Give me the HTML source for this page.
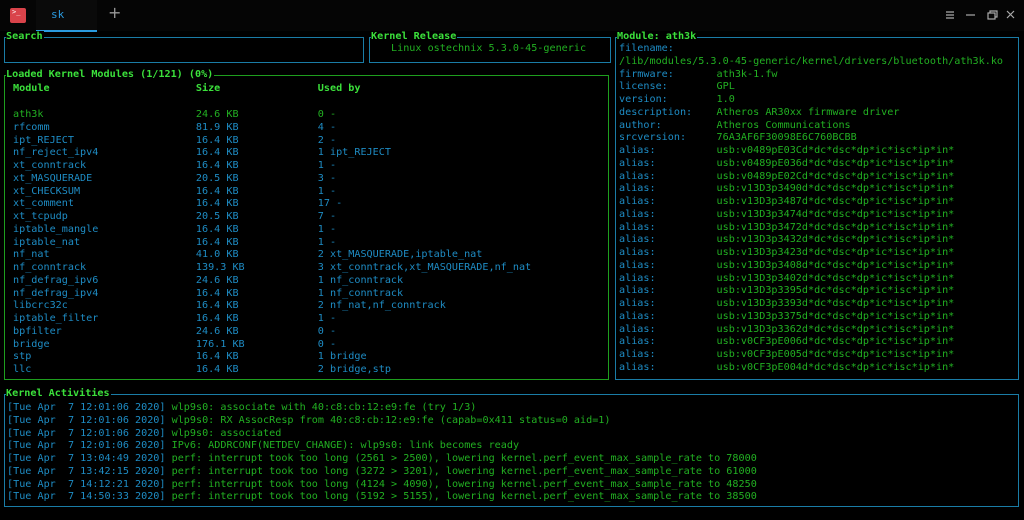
<!DOCTYPE html>
<html><head><meta charset="utf-8"><style>
html,body{margin:0;padding:0;background:#000;width:1024px;height:520px;overflow:hidden}
body{position:relative;font-family:"DejaVu Sans Mono","Liberation Mono",monospace;font-size:10.15px}
.p{position:absolute;margin:0;white-space:pre;line-height:12.75px;font-family:inherit;font-size:10.15px}
.b{color:#1e8cc4}.g{color:#22b022}.t{color:#3be03b;font-weight:bold}
.box{position:absolute;border:1px solid #1a7ca6;box-sizing:border-box}
.gb{border-color:#1e9e1e}
.ttl{position:absolute;top:-7px;left:1px;background:#000;line-height:12px;padding-right:1px}
</style></head><body>
<div style="position:absolute;left:0;top:0;width:1024px;height:31px;background:#050505"></div>
<div style="position:absolute;left:10px;top:8px;width:16px;height:15px;background:#d9434a;border-radius:2px"></div>
<div style="position:absolute;left:12px;top:8px;color:#fff;font-size:7px;line-height:9px">&gt;_</div>
<div style="position:absolute;left:36px;top:0;width:61px;height:31px;background:#0a0a0a"></div>
<div class="p b" style="left:51px;top:9px;font-size:11px;color:#2a9be0">sk</div>
<div style="position:absolute;left:36px;top:30px;width:61px;height:2px;background:#2a9be0"></div>
<div class="p" style="left:108px;top:7px;color:#999;font-size:16px;font-family:'DejaVu Sans'">+</div>
<svg style="position:absolute;left:940px;top:6px" width="84" height="20" stroke="#aaa" fill="none" stroke-width="1.2">
<path d="M6 6h8M6 9h8M6 12h8"/><path d="M26 9h9"/><rect x="48" y="7" width="7" height="6"/><path d="M50 7V5h7v6h-2"/><path d="M67 5l7 7M74 5l-7 7"/></svg>

<div class="box" style="left:4px;top:37px;width:360px;height:26px"><span class="ttl t">Search</span></div>
<div class="box" style="left:369px;top:37px;width:242px;height:26px"><span class="ttl t">Kernel Release</span></div>
<div class="p g" style="left:391px;top:43px">Linux ostechnix 5.3.0-45-generic</div>

<div class="box gb" style="left:4px;top:75px;width:605px;height:305px"><span class="ttl t">Loaded Kernel Modules (1/121) (0%)</span></div>
<div class="p t" style="left:13px;top:83px;font-weight:bold">Module                        Size                Used by</div>
<div class="p b" style="left:13px;top:109px"><span class="g">ath3k                         24.6 KB             0 -</span>
rfcomm                        81.9 KB             4 -
ipt_REJECT                    16.4 KB             2 -
nf_reject_ipv4                16.4 KB             1 ipt_REJECT
xt_conntrack                  16.4 KB             1 -
xt_MASQUERADE                 20.5 KB             3 -
xt_CHECKSUM                   16.4 KB             1 -
xt_comment                    16.4 KB             17 -
xt_tcpudp                     20.5 KB             7 -
iptable_mangle                16.4 KB             1 -
iptable_nat                   16.4 KB             1 -
nf_nat                        41.0 KB             2 xt_MASQUERADE,iptable_nat
nf_conntrack                  139.3 KB            3 xt_conntrack,xt_MASQUERADE,nf_nat
nf_defrag_ipv6                24.6 KB             1 nf_conntrack
nf_defrag_ipv4                16.4 KB             1 nf_conntrack
libcrc32c                     16.4 KB             2 nf_nat,nf_conntrack
iptable_filter                16.4 KB             1 -
bpfilter                      24.6 KB             0 -
bridge                        176.1 KB            0 -
stp                           16.4 KB             1 bridge
llc                           16.4 KB             2 bridge,stp</div>

<div class="box" style="left:615px;top:37px;width:404px;height:343px"><span class="ttl t">Module: ath3k</span></div>
<div class="p b" style="left:619px;top:43px">filename:
<span class="g">/lib/modules/5.3.0-45-generic/kernel/drivers/bluetooth/ath3k.ko</span>
firmware:       <span class="g">ath3k-1.fw</span>
license:        <span class="g">GPL</span>
version:        <span class="g">1.0</span>
description:    <span class="g">Atheros AR30xx firmware driver</span>
author:         <span class="g">Atheros Communications</span>
srcversion:     <span class="g">76A3AF6F30098E6C760BCBB</span>
alias:          <span class="g">usb:v0489pE03Cd*dc*dsc*dp*ic*isc*ip*in*</span>
alias:          <span class="g">usb:v0489pE036d*dc*dsc*dp*ic*isc*ip*in*</span>
alias:          <span class="g">usb:v0489pE02Cd*dc*dsc*dp*ic*isc*ip*in*</span>
alias:          <span class="g">usb:v13D3p3490d*dc*dsc*dp*ic*isc*ip*in*</span>
alias:          <span class="g">usb:v13D3p3487d*dc*dsc*dp*ic*isc*ip*in*</span>
alias:          <span class="g">usb:v13D3p3474d*dc*dsc*dp*ic*isc*ip*in*</span>
alias:          <span class="g">usb:v13D3p3472d*dc*dsc*dp*ic*isc*ip*in*</span>
alias:          <span class="g">usb:v13D3p3432d*dc*dsc*dp*ic*isc*ip*in*</span>
alias:          <span class="g">usb:v13D3p3423d*dc*dsc*dp*ic*isc*ip*in*</span>
alias:          <span class="g">usb:v13D3p3408d*dc*dsc*dp*ic*isc*ip*in*</span>
alias:          <span class="g">usb:v13D3p3402d*dc*dsc*dp*ic*isc*ip*in*</span>
alias:          <span class="g">usb:v13D3p3395d*dc*dsc*dp*ic*isc*ip*in*</span>
alias:          <span class="g">usb:v13D3p3393d*dc*dsc*dp*ic*isc*ip*in*</span>
alias:          <span class="g">usb:v13D3p3375d*dc*dsc*dp*ic*isc*ip*in*</span>
alias:          <span class="g">usb:v13D3p3362d*dc*dsc*dp*ic*isc*ip*in*</span>
alias:          <span class="g">usb:v0CF3pE006d*dc*dsc*dp*ic*isc*ip*in*</span>
alias:          <span class="g">usb:v0CF3pE005d*dc*dsc*dp*ic*isc*ip*in*</span>
alias:          <span class="g">usb:v0CF3pE004d*dc*dsc*dp*ic*isc*ip*in*</span></div>

<div class="box" style="left:4px;top:394px;width:1015px;height:113px"><span class="ttl t">Kernel Activities</span></div>
<div class="p b" style="left:7px;top:402px">[Tue Apr  7 12:01:06 2020] <span class="g">wlp9s0: associate with 40:c8:cb:12:e9:fe (try 1/3)</span>
[Tue Apr  7 12:01:06 2020] <span class="g">wlp9s0: RX AssocResp from 40:c8:cb:12:e9:fe (capab=0x411 status=0 aid=1)</span>
[Tue Apr  7 12:01:06 2020] <span class="g">wlp9s0: associated</span>
[Tue Apr  7 12:01:06 2020] <span class="g">IPv6: ADDRCONF(NETDEV_CHANGE): wlp9s0: link becomes ready</span>
[Tue Apr  7 13:04:49 2020] <span class="g">perf: interrupt took too long (2561 &gt; 2500), lowering kernel.perf_event_max_sample_rate to 78000</span>
[Tue Apr  7 13:42:15 2020] <span class="g">perf: interrupt took too long (3272 &gt; 3201), lowering kernel.perf_event_max_sample_rate to 61000</span>
[Tue Apr  7 14:12:21 2020] <span class="g">perf: interrupt took too long (4124 &gt; 4090), lowering kernel.perf_event_max_sample_rate to 48250</span>
[Tue Apr  7 14:50:33 2020] <span class="g">perf: interrupt took too long (5192 &gt; 5155), lowering kernel.perf_event_max_sample_rate to 38500</span></div>
</body></html>
